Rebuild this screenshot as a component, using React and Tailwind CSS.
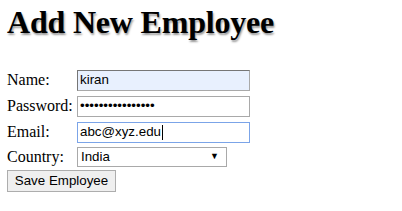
import React from "react";

export default function App() {
  return (
    <div className="w-[402px] h-[211px] bg-white overflow-hidden pl-[7px] pt-[4px]" style={{ fontFamily: '"Liberation Serif", serif' }}>
      <h1 className="text-[32px] leading-[36px] font-bold text-black tracking-[-0.2px] [text-shadow:1px_2px_2px_#999]">Add New Employee</h1>
      <div className="mt-[27px] flex flex-col text-[16px] text-black">
        <div className="flex items-center h-[26px]">
          <span className="w-[70px]">Name:</span>
          <div className="w-[173px] h-[21px] bg-[#e8f0fe] border border-[#a9a9a9] border-t-[#767676] border-l-[#767676] flex items-center px-[2px] text-[13.33px]" style={{ fontFamily: '"Liberation Sans", sans-serif' }}>kiran</div>
        </div>
        <div className="flex items-center h-[26px]">
          <span className="w-[70px]">Password:</span>
          <div className="w-[173px] h-[21px] bg-white border border-[#a9a9a9] flex items-center px-[2px] text-[13.33px]" style={{ fontFamily: '"Liberation Sans", sans-serif' }}>••••••••••••••••</div>
        </div>
        <div className="flex items-center h-[26px]">
          <span className="w-[70px]">Email:</span>
          <div className="w-[173px] h-[21px] bg-white border border-[#7ba4e8] flex items-center px-[2px] text-[13.33px]" style={{ fontFamily: '"Liberation Sans", sans-serif' }}>
            abc@xyz.edu<span className="w-px h-[15px] bg-black ml-[1px]" />
          </div>
        </div>
        <div className="flex items-center h-[24px]">
          <span className="w-[70px]">Country:</span>
          <div className="w-[150px] h-[20px] bg-white border border-[#a9a9a9] flex items-center justify-between pl-[3px] pr-[7px] text-[13.33px]" style={{ fontFamily: '"Liberation Sans", sans-serif' }}>
            <span>India</span>
            <span className="text-[9px]">▼</span>
          </div>
        </div>
        <div className="mt-[-1px]">
          <div className="inline-flex items-center justify-center w-[109px] h-[22px] bg-[#efefef] border border-[#adadad] text-[13.33px] text-black" style={{ fontFamily: '"Liberation Sans", sans-serif' }}>Save Employee</div>
        </div>
      </div>
    </div>
  );
}
